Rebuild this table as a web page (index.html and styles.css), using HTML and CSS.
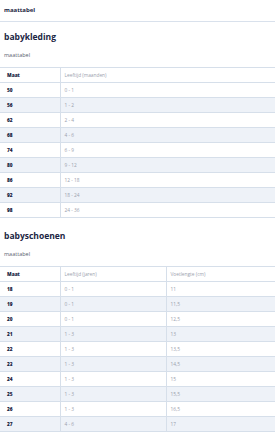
FILE: index.html
```html
<!DOCTYPE html>
<html lang="nl">
<head>
<meta charset="utf-8">
<link rel="stylesheet" href="styles.css">
</head>
<body>
<header class="topbar"><span class="topbar-title">maattabel</span></header>

<section class="block">
  <h2 class="block-title">babykleding</h2>
  <p class="block-sub">maattabel</p>
  <table class="size-table">
    <thead>
      <tr><th class="col-size">Maat</th><th>Leeftijd (maanden)</th></tr>
    </thead>
    <tbody>
      <tr><td class="col-size">50</td><td>0 - 1</td></tr>
      <tr><td class="col-size">56</td><td>1 - 2</td></tr>
      <tr><td class="col-size">62</td><td>2 - 4</td></tr>
      <tr><td class="col-size">68</td><td>4 - 6</td></tr>
      <tr><td class="col-size">74</td><td>6 - 9</td></tr>
      <tr><td class="col-size">80</td><td>9 - 12</td></tr>
      <tr><td class="col-size">86</td><td>12 - 18</td></tr>
      <tr><td class="col-size">92</td><td>18 - 24</td></tr>
      <tr><td class="col-size">98</td><td>24 - 36</td></tr>
    </tbody>
  </table>
</section>

<section class="block block-second">
  <h2 class="block-title">babyschoenen</h2>
  <p class="block-sub">maattabel</p>
  <table class="size-table">
    <thead>
      <tr><th class="col-size">Maat</th><th class="col-mid">Leeftijd (jaren)</th><th>Voetlengte (cm)</th></tr>
    </thead>
    <tbody>
      <tr><td class="col-size">18</td><td class="col-mid">0 - 1</td><td>11</td></tr>
      <tr><td class="col-size">19</td><td class="col-mid">0 - 1</td><td>11,5</td></tr>
      <tr><td class="col-size">20</td><td class="col-mid">0 - 1</td><td>12,5</td></tr>
      <tr><td class="col-size">21</td><td class="col-mid">1 - 3</td><td>13</td></tr>
      <tr><td class="col-size">22</td><td class="col-mid">1 - 3</td><td>13,5</td></tr>
      <tr><td class="col-size">23</td><td class="col-mid">1 - 3</td><td>14,5</td></tr>
      <tr><td class="col-size">24</td><td class="col-mid">1 - 3</td><td>15</td></tr>
      <tr><td class="col-size">25</td><td class="col-mid">1 - 3</td><td>15,5</td></tr>
      <tr><td class="col-size">26</td><td class="col-mid">1 - 3</td><td>16,5</td></tr>
      <tr><td class="col-size">27</td><td class="col-mid">4 - 6</td><td>17</td></tr>
    </tbody>
  </table>
</section>
</body>
</html>
```
FILE: styles.css
```css
* { box-sizing: border-box; }

html, body {
  margin: 0;
  padding: 0;
  background: #ffffff;
}

body {
  font-family: "Open Sans", "Lato", "Liberation Sans", sans-serif;
  color: #1b2543;
  width: 275px;
  overflow: hidden;
}

.topbar {
  height: 22px;
  border-bottom: 1px solid #d9e1ec;
  padding: 0 4px;
  display: flex;
  align-items: center;
}

.topbar-title {
  font-size: 6px;
  font-weight: 700;
  color: #1b2543;
  line-height: 8px;
  margin-top: -2px;
}

.block {
  padding-top: 8px;
}

.block-second {
  padding-top: 11px;
}

.block-title {
  margin: 0 0 0 4px;
  font-size: 8.5px;
  font-weight: 700;
  line-height: 14px;
  color: #1b2543;
}

.block-sub {
  margin: 7px 0 0 4px;
  font-size: 5.5px;
  line-height: 8px;
  color: #5a6170;
  height: 8px;
}

.size-table {
  width: 100%;
  border-collapse: collapse;
  margin-top: 8px;
  table-layout: fixed;
}

.size-table tr {
  height: 15px;
}

.size-table th,
.size-table td {
  border-top: 1px solid #d6dfea;
  border-bottom: 1px solid #d6dfea;
  padding: 0 0 0 7px;
  text-align: left;
  vertical-align: middle;
  font-size: 4.8px;
  line-height: 6px;
  height: 15px;
  font-weight: 400;
  color: #9aa1ad;
}

.size-table th.col-size,
.size-table td.col-size {
  width: 60px;
  font-weight: 800;
  color: #1b2543;
  border-right: 1px solid #d6dfea;
  padding-left: 7px;
}

.size-table th:not(.col-size),
.size-table td:not(.col-size) {
  padding-left: 4px;
}

.size-table .col-mid {
  width: 106px;
  border-right: 1px solid #d6dfea;
}

.size-table tbody tr:nth-child(even) {
  background: #eef2f8;
}
```
